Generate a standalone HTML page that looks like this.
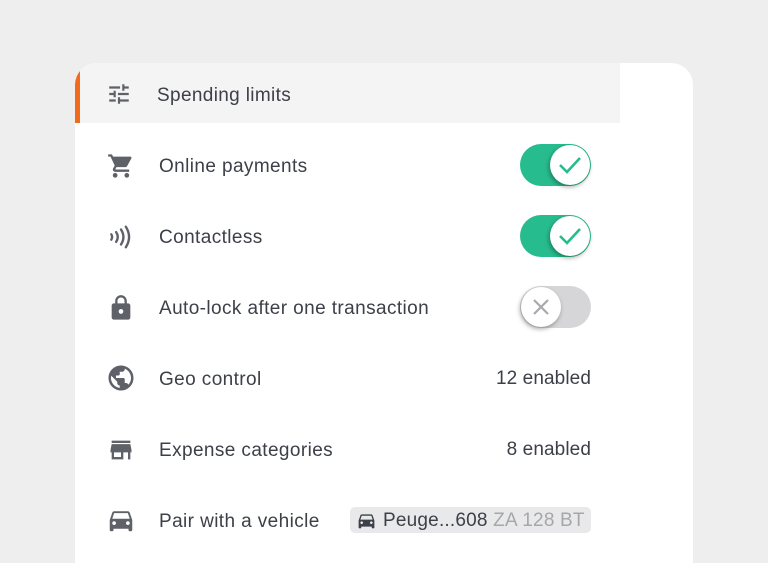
<!DOCTYPE html>
<html><head><style>
*{margin:0;padding:0;box-sizing:border-box}
body{width:768px;height:546px;background:#eeeeee;font-family:"Liberation Sans",sans-serif;position:relative;overflow:hidden;color:#3d4048}
.card{position:absolute;left:75px;top:63px;width:618px;height:500px;background:#fff;border-radius:22px 22px 0 0;overflow:hidden}
.hdr{position:absolute;left:0;top:0;width:545px;height:60px;background:#f4f4f4;border-left:5px solid #f26b1d}
.hdr span{position:absolute;left:77px;top:22px;font-size:19px;letter-spacing:0.35px}
.row{position:absolute;left:0;width:618px;height:40px}
.row .t{position:absolute;left:84px;top:11px;font-size:19px;letter-spacing:0.4px}
.row svg.ic{position:absolute;left:32px;top:7px}
.tg{position:absolute;left:445px;top:-1px;width:71px;height:42px;border-radius:21px;background:#27bc8e}
.tg .k{position:absolute;right:1px;top:1px;width:40px;height:40px;border-radius:50%;background:#fff;box-shadow:-1px 2px 5px rgba(0,0,0,.35)}
.tg.off{background:#d6d6d9}
.tg.off .k{left:1px;right:auto}
.val{position:absolute;right:102px;top:10px;font-size:19px;letter-spacing:0.1px}
.chip{position:absolute;left:275px;top:7px;width:241px;height:26px;background:#e9e9eb;border-radius:5px;font-size:19px;padding:3px 0 0 33px;white-space:nowrap;letter-spacing:0.2px}
.chip b{font-weight:normal;color:#a5a7ac}
</style></head><body>
<div class="card">
 <div class="hdr">
  <svg style="position:absolute;left:26px;top:18px" width="26" height="26" viewBox="0 0 24 24" fill="#5f6168"><path d="M3 17v2h6v-2H3zM3 5v2h10V5H3zm10 16v-2h8v-2h-8v-2h-2v6h2zM7 9v2H3v2h4v2h2V9H7zm14 4v-2H11v2h10zm-6-4h2V7h4V5h-4V3h-2v6z"/></svg>
  <span>Spending limits</span>
 </div>
 <div class="row" style="top:82px">
  <svg class="ic" width="28" height="28" viewBox="0 0 24 24" fill="#5f6168"><path d="M7 18c-1.1 0-2 .9-2 2s.9 2 2 2 2-.9 2-2-.9-2-2-2zM1 2v2h2l3.6 7.59-1.35 2.45c-.16.28-.25.61-.25.96 0 1.1.9 2 2 2h12v-2H7.42c-.14 0-.25-.11-.25-.25l.03-.12.9-1.63h7.45c.75 0 1.41-.41 1.75-1.03l3.58-6.49A1 1 0 0020 4H5.21l-.94-2H1zm16 16c-1.1 0-2 .9-2 2s.9 2 2 2 2-.9 2-2-.9-2-2-2z"/></svg>
  <span class="t">Online payments</span>
  <div class="tg"><div class="k"><svg width="40" height="40" viewBox="0 0 40 40"><path d="M10 20l7 7 13-14" stroke="#27bc8e" stroke-width="2.6" fill="none"/></svg></div></div>
 </div>
 <div class="row" style="top:153px">
  <svg class="ic" width="28" height="28" viewBox="0 0 26 26" fill="none" stroke="#5f6168" stroke-width="2.2" stroke-linecap="round"><path d="M4 10.5q1.5 2.5 0 5"/><path d="M8.5 8.5q3 4.5 0 9"/><path d="M13 6q4.5 7 0 14"/><path d="M17.5 3.5q6 9.5 0 19"/></svg>
  <span class="t">Contactless</span>
  <div class="tg"><div class="k"><svg width="40" height="40" viewBox="0 0 40 40"><path d="M10 20l7 7 13-14" stroke="#27bc8e" stroke-width="2.6" fill="none"/></svg></div></div>
 </div>
 <div class="row" style="top:224px">
  <svg class="ic" width="28" height="28" viewBox="0 0 24 24" fill="#5f6168"><path d="M18 8h-1V6c0-2.76-2.24-5-5-5S7 3.24 7 6v2H6c-1.1 0-2 .9-2 2v10c0 1.1.9 2 2 2h12c1.1 0 2-.9 2-2V10c0-1.1-.9-2-2-2zm-6 9c-1.1 0-2-.9-2-2s.9-2 2-2 2 .9 2 2-.9 2-2 2zM9 8V6c0-1.66 1.34-3 3-3s3 1.34 3 3v2H9z"/></svg>
  <span class="t">Auto-lock after one transaction</span>
  <div class="tg off"><div class="k"><svg width="40" height="40" viewBox="0 0 40 40"><path d="M13 13l14 14M27 13L13 27" stroke="#a8a8ad" stroke-width="2.2"/></svg></div></div>
 </div>
 <div class="row" style="top:295px">
  <svg class="ic" width="30" height="30" viewBox="0 0 24 24" fill="#5f6168" style="left:31px;top:5px"><path d="M12 2C6.48 2 2 6.48 2 12s4.48 10 10 10 10-4.48 10-10S17.52 2 12 2zm-1 17.93c-3.95-.49-7-3.85-7-7.93 0-.62.08-1.21.21-1.79L9 15v1c0 1.1.9 2 2 2v1.93zm6.9-2.54c-.26-.81-1-1.39-1.9-1.39h-1v-3c0-.55-.45-1-1-1H8v-2h2c.55 0 1-.45 1-1V7h2c1.1 0 2-.9 2-2v-.41c2.93 1.19 5 4.06 5 7.41 0 2.08-.8 3.97-2.1 5.39z"/></svg>
  <span class="t">Geo control</span>
  <span class="val">12 enabled</span>
 </div>
 <div class="row" style="top:366px">
  <svg class="ic" width="28" height="28" viewBox="0 0 24 24" fill="#5f6168"><path d="M20 4H4v2h16V4zm1 10v-2l-1-5H4l-1 5v2h1v6h10v-6h4v6h2v-6h1zm-9 4H6v-4h6v4z"/></svg>
  <span class="t">Expense categories</span>
  <span class="val">8 enabled</span>
 </div>
 <div class="row" style="top:437px">
  <svg class="ic" width="30" height="30" viewBox="0 0 24 24" fill="#5f6168" style="left:31px;top:5px"><path d="M18.92 6.01C18.72 5.42 18.16 5 17.5 5h-11c-.66 0-1.21.42-1.42 1.01L3 12v8c0 .55.45 1 1 1h1c.55 0 1-.45 1-1v-1h12v1c0 .55.45 1 1 1h1c.55 0 1-.45 1-1v-8l-2.08-5.99zM6.5 16c-.83 0-1.5-.67-1.5-1.5S5.67 13 6.5 13s1.5.67 1.5 1.5S7.33 16 6.5 16zm11 0c-.83 0-1.5-.67-1.5-1.5s.67-1.5 1.5-1.5 1.5.67 1.5 1.5-.67 1.5-1.5 1.5zM5 11l1.5-4.5h11L19 11H5z"/></svg>
  <span class="t">Pair with a vehicle</span>
  <div class="chip"><svg style="position:absolute;left:6px;top:3px" width="21" height="21" viewBox="0 0 24 24" fill="#3d4048"><path d="M18.92 6.01C18.72 5.42 18.16 5 17.5 5h-11c-.66 0-1.21.42-1.42 1.01L3 12v8c0 .55.45 1 1 1h1c.55 0 1-.45 1-1v-1h12v1c0 .55.45 1 1 1h1c.55 0 1-.45 1-1v-8l-2.08-5.99zM6.5 16c-.83 0-1.5-.67-1.5-1.5S5.67 13 6.5 13s1.5.67 1.5 1.5S7.33 16 6.5 16zm11 0c-.83 0-1.5-.67-1.5-1.5s.67-1.5 1.5-1.5 1.5.67 1.5 1.5-.67 1.5-1.5 1.5zM5 11l1.5-4.5h11L19 11H5z"/></svg>Peuge...608 <b>ZA 128 BT</b></div>
 </div>
</div>
</body></html>
